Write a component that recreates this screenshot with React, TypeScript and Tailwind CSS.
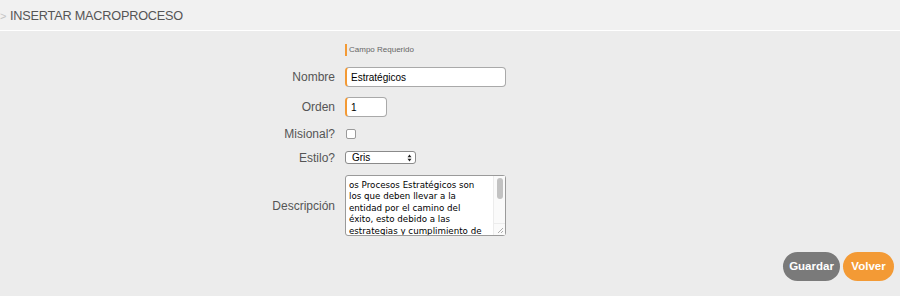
import { useState } from "react";

const DESC =
  "os Procesos Estratégicos son los que deben llevar a la entidad por el camino del éxito, esto debido a las estrategias y cumplimiento de Plan de Desarrollo Institucional y los objetivos de la entidad.";

export default function App() {
  const [nombre, setNombre] = useState("Estratégicos");
  const [orden, setOrden] = useState("1");
  const [misional, setMisional] = useState(false);
  const [estilo, setEstilo] = useState("Gris");
  const [desc, setDesc] = useState(DESC);

  return (
    <main className="h-[296px] w-[900px] bg-[#ececec] font-['Liberation_Sans',Arial,sans-serif]">
      <header className="flex h-[31px] items-center border-b border-white bg-[#f1f1f1] pt-[3px]">
        <span className="w-[10px] text-[11px] text-[#c4c4c4]">&gt;</span>
        <h1 className="text-[12.7px] tracking-[-0.2px] text-[#555]">INSERTAR MACROPROCESO</h1>
      </header>

      <form className="pt-[13px]" onSubmit={(e) => e.preventDefault()}>
        <div className="flex h-[12px] items-center pl-[345px]">
          <span className="h-[12px] w-[2px] bg-[#f39a35]" />
          <span className="pl-[2px] text-[8px] text-[#666]">Campo Requerido</span>
        </div>

        <Row label="Nombre" className="mt-[11px] h-[20px]">
          <input
            value={nombre}
            onChange={(e) => setNombre(e.target.value)}
            className="h-[20px] w-[161px] rounded-[4px] border border-[#a9a9a9] border-l-2 border-l-[#f39a35] bg-white px-[4px] text-[10px] text-black outline-none"
          />
        </Row>

        <Row label="Orden" className="mt-[10px] h-[20px]">
          <input
            value={orden}
            onChange={(e) => setOrden(e.target.value)}
            className="h-[20px] w-[42px] rounded-[4px] border border-[#a9a9a9] border-l-2 border-l-[#f39a35] bg-white px-[4px] text-[10px] text-black outline-none"
          />
        </Row>

        <Row label="Misional?" className="mt-[10px] h-[14px]">
          <input
            type="checkbox"
            checked={misional}
            onChange={(e) => setMisional(e.target.checked)}
            className="ml-[1px] h-[10px] w-[10px] appearance-none rounded-[2px] border border-[#9a9a9a] bg-white"
          />
        </Row>

        <Row label="Estilo?" className="mt-[10px] h-[13px]">
          <div className="relative h-[13px] w-[71px]">
            <select
              value={estilo}
              onChange={(e) => setEstilo(e.target.value)}
              className="block h-[13px] w-[71px] appearance-none rounded-[3px] border border-[#8a8a8a] bg-white py-0 pl-[6px] text-[10px] leading-[11px] text-black outline-none"
            >
              <option>Gris</option>
              <option>Azul</option>
              <option>Verde</option>
            </select>
            <svg className="pointer-events-none absolute right-[4px] top-[2.5px]" width="5" height="8" viewBox="0 0 5 8">
              <path d="M0.5 3.3 L2.5 0.5 L4.5 3.3 Z M0.5 4.7 L2.5 7.5 L4.5 4.7 Z" fill="#222" />
            </svg>
          </div>
        </Row>

        <Row label="Descripción" className="mt-[11px] h-[61px]">
          <div className="relative h-[61px] w-[161px]">
            <textarea
              value={desc}
              onChange={(e) => setDesc(e.target.value)}
              className="block h-[61px] w-[161px] resize-none overflow-hidden rounded-[3px] border border-[#9a9a9a] bg-white pt-[4px] pb-0 pl-[3px] pr-[21px] font-['DejaVu_Sans',Verdana,sans-serif] text-[8.7px] leading-[11.4px] text-[#000] outline-none"
            />
            <div className="pointer-events-none absolute right-[1px] top-[1px] flex h-[59px] w-[12px] flex-col border-l border-[#ececec] bg-[#fafafa]">
              <div className="mx-auto mt-[2px] h-[21px] w-[6px] rounded-full bg-[#c2c2c2]" />
              <div className="mt-auto h-[12px] w-[11px] border-t border-[#ececec]">
                <svg width="11" height="11" viewBox="0 0 11 11">
                  <path d="M9 4 L4 9 M9 7 L7 9" stroke="#999" strokeWidth="0.8" />
                </svg>
              </div>
            </div>
          </div>
        </Row>

        <div className="mt-[16px] flex justify-end gap-[3px] pr-[6px]">
          <button className="h-[29px] w-[57px] rounded-full bg-[#7a7a7a] text-[11.5px] font-bold text-white">
            Guardar
          </button>
          <button className="h-[29px] w-[51px] rounded-full bg-[#f39a35] text-[11.5px] font-bold text-white">
            Volver
          </button>
        </div>
      </form>
    </main>
  );
}

function Row({ label, className, children }: { label: string; className?: string; children: React.ReactNode }) {
  return (
    <div className={`flex items-center gap-[10px] ${className ?? ""}`}>
      <label className="w-[335px] text-right text-[12px] text-[#555]">{label}</label>
      {children}
    </div>
  );
}
